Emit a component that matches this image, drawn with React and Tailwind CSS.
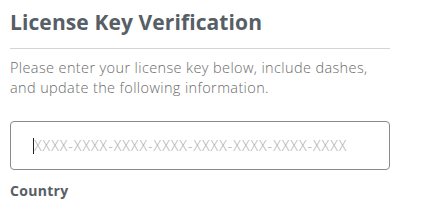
import React from "react";

export default function App() {
  return (
    <div className="bg-white w-[431px] h-[203px] overflow-hidden font-['Open_Sans',sans-serif]">
      <div className="w-[380px] ml-[10px]">
        {/* Header */}
        <h1 className="pt-[8px] text-[21px] leading-[28px] font-bold text-[#565e66] tracking-[0.1px]">
          License Key Verification
        </h1>
        <hr className="mt-[12px] border-t border-[#d4d4d4]" />
        <p className="mt-[9px] text-[14.5px] leading-[20px] font-light tracking-[0.38px] text-[#6b6b6b]">
          Please enter your license key below, include dashes, and update the following information.
        </p>

        {/* Key input */}
        <div className="relative mt-[23px]">
          <input
            type="text"
            placeholder="XXXX-XXXX-XXXX-XXXX-XXXX-XXXX-XXXX-XXXX"
            className="block w-full h-[49px] rounded-[4px] border border-[#8a8a8a] pl-[23px] text-[14px] tracking-[1.05px] text-[#333] placeholder:text-[#ababab] outline-none font-['Open_Sans',sans-serif] font-light"
          />
          <span className="absolute left-[23px] top-[17px] w-px h-[16px] bg-[#222]" />
        </div>

        <label className="block mt-[12px] text-[14px] leading-[18px] font-bold tracking-[0.3px] text-[#565e66]">
          Country
        </label>
      </div>
    </div>
  );
}
